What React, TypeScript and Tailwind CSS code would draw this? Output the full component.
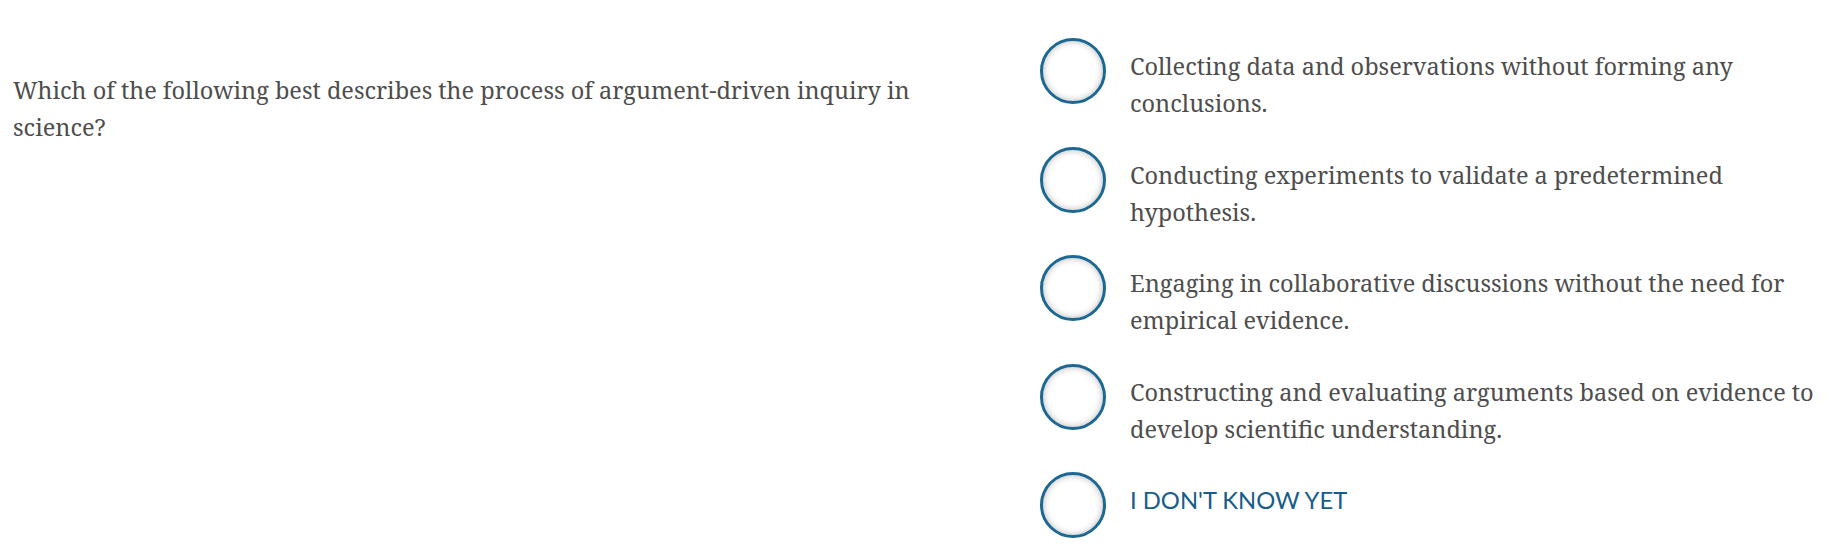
import React from 'react';

const options = [
  'Collecting data and observations without forming any conclusions.',
  'Conducting experiments to validate a predetermined hypothesis.',
  'Engaging in collaborative discussions without the need for empirical evidence.',
  'Constructing and evaluating arguments based on evidence to develop scientific understanding.',
];

const serif = 'font-["Noto_Serif","DejaVu_Serif",serif]';

function Radio() {
  return (
    <span className="w-[66px] h-[66px] shrink-0 rounded-full border-[3px] border-[#1c6892] bg-white shadow-[inset_0_0_7px_rgba(0,0,0,0.28)]" />
  );
}

export default function App() {
  return (
    <div className="flex w-full min-h-[558px] bg-white">
      <div className="w-[1040px] shrink-0 pl-[13px] pt-[72px] pr-[80px]">
        <p className={`${serif} text-[23.5px] leading-[37px] text-[#4d4d4d]`}>
          Which of the following best describes the process of argument-driven inquiry in science?
        </p>
      </div>
      <div className="flex-1 flex flex-col gap-[24.5px] pt-[38px] pr-[15px]">
        {options.map((o) => (
          <label key={o} className="flex items-start gap-6 cursor-pointer">
            <Radio />
            <span className={`${serif} pt-[10px] text-[23.5px] leading-[37px] text-[#4d4d4d]`}>{o}</span>
          </label>
        ))}
        <label className="flex items-start gap-6 cursor-pointer">
          <Radio />
          <span className='pt-[10px] font-["Lato",sans-serif] text-[23.8px] leading-[37px] text-[#185d8a]'>
            I DON'T KNOW YET
          </span>
        </label>
      </div>
    </div>
  );
}
